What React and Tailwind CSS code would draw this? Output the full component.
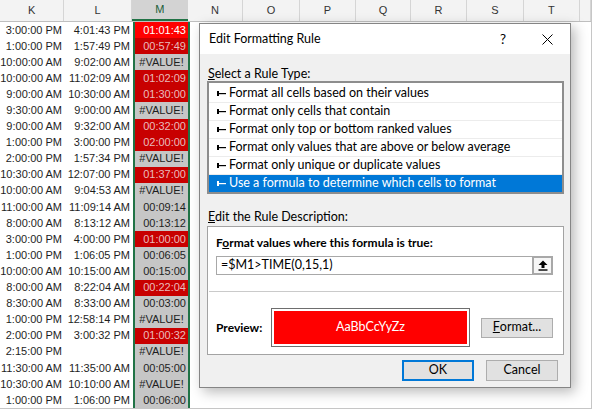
import React from "react";

const rows = [
  ["3:00:00 PM", "4:01:43 PM", "01:01:43", "active"],
  ["1:00:00 PM", "1:57:49 PM", "00:57:49", "red"],
  ["10:00:00 AM", "9:02:00 AM", "#VALUE!", "err"],
  ["10:00:00 AM", "11:02:09 AM", "01:02:09", "red"],
  ["9:00:00 AM", "10:30:00 AM", "01:30:00", "red"],
  ["9:30:00 AM", "9:00:00 AM", "#VALUE!", "err"],
  ["9:00:00 AM", "9:32:00 AM", "00:32:00", "red"],
  ["1:00:00 PM", "3:00:00 PM", "02:00:00", "red"],
  ["2:00:00 PM", "1:57:34 PM", "#VALUE!", "err"],
  ["10:30:00 AM", "12:07:00 PM", "01:37:00", "red"],
  ["10:00:00 AM", "9:04:53 AM", "#VALUE!", "err"],
  ["11:00:00 AM", "11:09:14 AM", "00:09:14", "gray"],
  ["8:00:00 AM", "8:13:12 AM", "00:13:12", "gray"],
  ["3:00:00 PM", "4:00:00 PM", "01:00:00", "red"],
  ["1:00:00 PM", "1:06:05 PM", "00:06:05", "gray"],
  ["10:00:00 AM", "10:15:00 AM", "00:15:00", "gray"],
  ["8:00:00 AM", "8:22:04 AM", "00:22:04", "red"],
  ["8:30:00 AM", "8:33:00 AM", "00:03:00", "gray"],
  ["1:00:00 PM", "12:58:14 PM", "#VALUE!", "err"],
  ["2:00:00 PM", "3:00:32 PM", "01:00:32", "red"],
  ["2:15:00 PM", "", "#VALUE!", "err"],
  ["11:30:00 AM", "11:35:00 AM", "00:05:00", "gray"],
  ["10:30:00 AM", "10:10:00 AM", "#VALUE!", "err"],
  ["1:00:00 PM", "1:06:00 PM", "00:06:00", "gray"],
  ["", "", "", "red"],
];

const ruleTypes = [
  "Format all cells based on their values",
  "Format only cells that contain",
  "Format only top or bottom ranked values",
  "Format only values that are above or below average",
  "Format only unique or duplicate values",
  "Use a formula to determine which cells to format",
];

const otherCols = [
  ["N", "w-[55px]"],
  ["O", "w-[57px]"],
  ["P", "w-[56px]"],
  ["Q", "w-[55px]"],
  ["R", "w-[56px]"],
  ["S", "w-[57px]"],
  ["T", "w-[56px]"],
  ["", "w-[11px]"],
];

const Pointer = ({ color }) => (
  <svg width="9" height="7" viewBox="0 0 9 7" className="shrink-0">
    <rect x="0" y="1" width="2" height="5" fill={color} />
    <rect x="2" y="3" width="7" height="1.2" fill={color} />
  </svg>
);

const mCellClass = (kind) => {
  if (kind === "active") return "bg-[#ff0000] text-white justify-end pr-[2px]";
  if (kind === "red") return "bg-[#c80000] text-[#e9bcbc] justify-end pr-[2px]";
  if (kind === "err") return "bg-[#c6c6c6] text-[#1e1e1e] justify-center";
  return "bg-[#c6c6c6] text-[#1e1e1e] justify-end pr-[2px]";
};

const Sheet = () => (
  <div className="flex flex-col text-[11px] text-[#1e1e1e]">
    <div className="flex h-[22px] bg-[#f3f3f3] border-b border-[#bfbfbf] text-[#333]">
      <div className="w-[65px] flex items-center justify-center border-r border-[#d5d5d5]">K</div>
      <div className="w-[68px] flex items-center justify-center border-r border-[#d5d5d5]">L</div>
      <div className="w-[57px] flex items-center justify-center bg-[#d3d3d3] border-b-2 border-[#217346] text-[#1b5e38]">M</div>
      {otherCols.map(([c, w], i) => (
        <div key={i} className={`${w} shrink-0 flex items-center justify-center border-r border-[#d5d5d5]`}>
          {c}
        </div>
      ))}
    </div>
    {rows.map((r, i) => (
      <div key={i} className="flex h-[16.1px] shrink-0 leading-none">
        <div className="w-[65px] flex items-center justify-end pr-[3px]">{r[0]}</div>
        <div className="w-[68px] flex items-center justify-end pr-[3px]">{r[1]}</div>
        <div className="w-[57px] border-x-2 border-[#217346] bg-white">
          <div className={`h-full flex items-center ${mCellClass(r[3])}`}>{r[2]}</div>
        </div>
      </div>
    ))}
  </div>
);

const Dialog = () => (
  <div className="absolute left-[199px] top-[23px] w-[372px] h-[365px] border border-[#858585] bg-[#f0f0f0] shadow-[4px_4px_12px_rgba(0,0,0,0.28)] flex flex-col text-[12.5px] text-black font-['Lato','Liberation_Sans',sans-serif]">
    <div className="h-[30px] bg-white flex items-center pl-[9px] shrink-0">
      <span className="text-[12.5px]">Edit Formatting Rule</span>
      <span className="ml-auto mr-[36px] text-[13.5px]">?</span>
      <svg width="11" height="11" viewBox="0 0 11 11" className="mr-[17px]">
        <path d="M0.5 0.5 L10.5 10.5 M10.5 0.5 L0.5 10.5" stroke="#000" strokeWidth="1" />
      </svg>
    </div>
    <div className="flex flex-col px-[7px] pr-[6px]">
      <div className="mt-[13px] h-[14px] leading-[14px] pl-[1px]">
        <span className="underline">S</span>elect a Rule Type:
      </div>
      <div className="border-2 border-[#8d8d8d] bg-white flex flex-col pt-[2px]">
        {ruleTypes.map((t, i) => {
          const sel = i === ruleTypes.length - 1;
          return (
            <div
              key={t}
              className={`flex items-center gap-[3px] pl-[8px] ${
                sel ? "bg-[#0078d7] text-white h-[17px]" : "h-[18px] border-b border-[#ececec]"
              }`}
            >
              <Pointer color={sel ? "#fff" : "#000"} />
              <span>{t}</span>
            </div>
          );
        })}
      </div>
      <div className="mt-[16px] h-[14px] leading-[14px] pl-[1px]">
        <span className="underline">E</span>dit the Rule Description:
      </div>
      <div className="mt-[2px] h-[129px] border border-[#a3a3a3] bg-white flex flex-col">
        <div className="mt-[9px] pl-[8px] h-[14px] leading-[14px] font-bold text-[12px]">
          F<span className="underline">o</span>rmat values where this formula is true:
        </div>
        <div className="mt-[6px] ml-[8px] mr-[10px] h-[19px] border border-[#a8a8a8] flex items-center">
          <span className="pl-[4px] flex-1">=$M1&gt;TIME(0,15,1)</span>
          <div className="w-[21px] h-[19px] -mr-px border-2 border-[#a8a8a8] bg-[#f6f6f6] flex items-center justify-center">
            <svg width="10" height="11" viewBox="0 0 10 11">
              <path d="M5 0.5 L9.5 5 L6.5 5 L6.5 8 L3.5 8 L3.5 5 L0.5 5 Z" fill="#000" />
              <rect x="0.5" y="9.3" width="9" height="1.4" fill="#000" />
            </svg>
          </div>
        </div>
        <div className="mt-[16px] mx-[1px] border-t border-[#cacaca]" />
        <div className="mt-[16px] flex items-center pl-[8px]">
          <span className="font-bold w-[55px] text-[12px]">Preview:</span>
          <div className="w-[199px] h-[39px] border border-[#6e6e6e] p-[2px]">
            <div className="h-full bg-[#ff0000] text-white flex items-center justify-center">AaBbCcYyZz</div>
          </div>
          <button className="ml-[11px] w-[72px] h-[20px] bg-[#e1e1e1] border border-[#adadad] flex items-center justify-center">
            <span className="underline">F</span>ormat...
          </button>
        </div>
      </div>
      <div className="mt-[5px] flex justify-end pr-[6px] gap-[12px]">
        <button className="w-[72px] h-[21px] bg-[#e1e1e1] border-2 border-[#0078d7] flex items-center justify-center">
          OK
        </button>
        <button className="w-[72px] h-[21px] bg-[#e1e1e1] border border-[#adadad] flex items-center justify-center">
          Cancel
        </button>
      </div>
    </div>
  </div>
);

export default function App() {
  return (
    <div className="relative w-[593px] h-[410px] overflow-hidden bg-white font-['Liberation_Sans',Arial,sans-serif]">
      <div className="w-[592px] h-[409px] border-r border-b border-[#c6c6c6] overflow-hidden">
        <Sheet />
      </div>
      <Dialog />
    </div>
  );
}
